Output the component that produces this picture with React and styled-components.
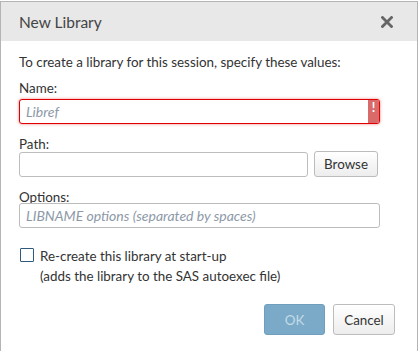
import React from "react";
import styled, { createGlobalStyle } from "styled-components";

const Global = createGlobalStyle`
  html, body { margin: 0; padding: 0; background: #fff; }
  body { font-family: Lato, "Noto Sans", "Liberation Sans", sans-serif; color: #333; }
  * { box-sizing: border-box; }
`;

const Dialog = styled.div`
  width: 418px;
  height: 350px;
  margin-top: 1px;
  border: 1px solid #b4b4b4;
  border-bottom: none;
  background: #fff;
  display: flex;
  flex-direction: column;
`;

const Header = styled.div`
  height: 39px;
  background: #e8e8e8;
  display: flex;
  align-items: center;
  justify-content: space-between;
  padding: 0 24px 0 18px;
`;

const Title = styled.div`
  font-size: 15.5px;
  color: #444;
`;

const Close = styled.button`
  border: none;
  background: none;
  padding: 0;
  width: 12px;
  height: 12px;
  display: flex;
  cursor: pointer;
`;

const Body = styled.div`
  padding: 12px 19px 0 18px;
  display: flex;
  flex-direction: column;
`;

const Intro = styled.div`
  font-size: 13.4px;
  line-height: 18px;
  color: #333;
  margin-bottom: 10px;
`;

const Label = styled.label`
  font-size: 13.4px;
  line-height: 14px;
  color: #333;
  margin-top: ${p => p.$top || 0}px;
  margin-bottom: ${p => p.$bottom || 0}px;
`;

const Row = styled.div`
  display: flex;
  gap: 6px;
  align-items: center;
`;

const Field = styled.div`
  width: ${p => p.$width}px;
  height: 25px;
  border: 1px solid ${p => (p.$error ? "#e00000" : "#bdbdbd")};
  border-radius: 3px;
  background: #fff;
  box-shadow: ${p => (p.$error ? "0 0 3px rgba(230,0,0,0.5)" : "none")};
  display: flex;
  overflow: hidden;
`;

const Input = styled.input`
  flex: 1;
  min-width: 0;
  border: none;
  outline: none;
  background: transparent;
  padding: 0 6px;
  font-family: inherit;
  font-size: 14px;
  color: #333;
  &::placeholder {
    color: #8d99a8;
    font-style: italic;
  }
`;

const ErrorMark = styled.div`
  width: 11px;
  background: #d86a6a;
  color: #fff;
  font-weight: bold;
  font-size: 12.5px;
  display: flex;
  justify-content: center;
  line-height: 15px;
`;

const Button = styled.button`
  height: ${p => p.$height || 25}px;
  width: ${p => p.$width}px;
  border: 1px solid ${p => (p.$primary ? "#6f9fbd" : "#bcbcbc")};
  border-radius: 3px;
  background: ${p =>
    p.$primary ? "#7aaac7" : "linear-gradient(#ffffff, #ededed)"};
  color: ${p => (p.$primary ? "#c4dbe9" : "#333")};
  font-family: inherit;
  font-size: 13.4px;
  padding: 0;
  cursor: pointer;
`;

const CheckRow = styled.div`
  display: flex;
  align-items: flex-start;
  gap: 6px;
  margin-top: 18px;
  padding-left: 1px;
`;

const Box = styled.div`
  width: 14px;
  height: 14px;
  border: 1px solid #2f5a7e;
  border-radius: 1px;
  margin-top: 2px;
  flex-shrink: 0;
`;

const CheckText = styled.div`
  font-size: 13.4px;
  line-height: 20px;
  color: #333;
`;

const Footer = styled.div`
  display: flex;
  justify-content: flex-end;
  gap: 8px;
  padding: 18px 22px 0 0;
`;

export default function App() {
  return (
    <>
      <Global />
      <Dialog>
        <Header>
          <Title>New Library</Title>
          <Close aria-label="Close">
            <svg width="12" height="12" viewBox="0 0 12 12">
              <path
                d="M1.5 1.5 L10.5 10.5 M10.5 1.5 L1.5 10.5"
                stroke="#666"
                strokeWidth="2.8"
                strokeLinecap="square"
              />
            </svg>
          </Close>
        </Header>
        <Body>
          <Intro>To create a library for this session, specify these values:</Intro>
          <Label $bottom={4}>Name:</Label>
          <Field $width={361} $error>
            <Input placeholder="Libref" />
            <ErrorMark>!</ErrorMark>
          </Field>
          <Label $top={13}>Path:</Label>
          <Row>
            <Field $width={289}>
              <Input />
            </Field>
            <Button $width={64} $height={26}>Browse</Button>
          </Row>
          <Label $top={13} $bottom={-1}>Options:</Label>
          <Field $width={361}>
            <Input placeholder="LIBNAME options (separated by spaces)" />
          </Field>
          <CheckRow>
            <Box />
            <CheckText>
              Re-create this library at start-up
              <br />
              (adds the library to the SAS autoexec file)
            </CheckText>
          </CheckRow>
        </Body>
        <Footer>
          <Button $primary $width={61} $height={31}>OK</Button>
          <Button $width={62} $height={31}>Cancel</Button>
        </Footer>
      </Dialog>
    </>
  );
}
